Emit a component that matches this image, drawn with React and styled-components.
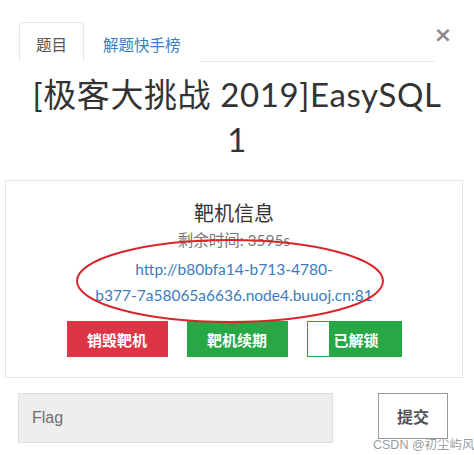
import React from "react";
import styled, { createGlobalStyle } from "styled-components";

const Global = createGlobalStyle`
  html, body { margin: 0; padding: 0; background: #fff; }
  body { font-family: Lato, "Noto Sans CJK SC", sans-serif; color: #333; }
`;

const Page = styled.div`
  position: relative;
  width: 474px;
  height: 455px;
  overflow: hidden;
  padding-top: 22px;
  box-sizing: border-box;
`;

const Header = styled.div`
  display: flex;
  align-items: flex-start;
  padding-left: 19px;
`;

const Tabs = styled.div`
  flex: 0 0 416px;
  display: flex;
  border-bottom: 1px solid #e8e8e8;
`;

const Tab = styled.div`
  height: 40px;
  box-sizing: border-box;
  padding: 0 ${(p) => (p.$active ? "16px" : "18px")};
  display: flex;
  align-items: center;
  padding-top: 3px;
  font-family: "Noto Sans CJK SC", sans-serif;
  font-size: 15.5px;
  color: ${(p) => (p.$active ? "#555" : "#3b7fc0")};
  border: 1px solid ${(p) => (p.$active ? "#e6e6e6" : "transparent")};
  border-bottom: none;
  border-radius: 4px 4px 0 0;
  margin-bottom: -1px;
  background: #fff;
`;

const Close = styled.div`
  margin-left: 1px;
  width: 14px;
  display: flex;
  justify-content: center;
  margin-top: 1px;
  font-family: "DejaVu Sans", sans-serif;
  font-size: 22px;
  font-weight: bold;
  line-height: 24px;
  color: #8a8a8a;
`;

const Title = styled.h1`
  margin: 10px 0 0;
  text-align: center;
  font-family: Lato, "Noto Sans CJK SC", sans-serif;
  font-weight: 400;
  font-size: 33px;
  line-height: 45px;
  color: #333;
  letter-spacing: 0.6px;
`;

const Card = styled.section`
  position: relative;
  margin: 18px 11px 0 5px;
  border: 1px solid #e4e4e4;
  padding: 18px 0 20px;
  display: flex;
  flex-direction: column;
  align-items: center;
`;

const CardTitle = styled.div`
  font-family: "Noto Sans CJK SC", sans-serif;
  font-size: 20px;
  line-height: 28px;
  color: #333;
`;

const Remaining = styled.div`
  margin-top: 2px;
  font-family: Lato, "Noto Sans CJK SC", sans-serif;
  font-size: 15.5px;
  line-height: 22px;
  color: #7a7a7a;
`;

const Url = styled.a`
  margin-top: 5px;
  text-align: center;
  font-family: Lato, sans-serif;
  font-size: 15.5px;
  line-height: 26px;
  color: #3b7cbd;
  text-decoration: none;
`;

const Buttons = styled.div`
  margin-top: 13px;
  display: flex;
  gap: 19px;
`;

const Btn = styled.button`
  width: ${(p) => p.$w}px;
  height: 36px;
  border: 1px solid ${(p) => p.$bg};
  background: ${(p) =>
    p.$handle ? `linear-gradient(to right, #fff 21px, ${p.$bg} 21px)` : p.$bg};
  color: #fff;
  font-family: "Noto Sans CJK SC", sans-serif;
  font-weight: 700;
  font-size: 15px;
  padding: 0;
  padding-left: ${(p) => (p.$handle ? "4px" : "0")};
`;

const Ellipse = styled.svg`
  position: absolute;
  left: 0;
  top: 0;
  pointer-events: none;
`;

const FormRow = styled.div`
  margin-top: 15px;
  display: flex;
  align-items: flex-start;
  padding-left: 18px;
`;

const Input = styled.input`
  width: 315px;
  height: 50px;
  box-sizing: border-box;
  background: #eee;
  border: 1px solid #ddd;
  padding: 0 13px;
  font-family: "Liberation Sans", Arial, sans-serif;
  font-size: 16px;
  color: #555;
  &::placeholder { color: #6f6f6f; }
`;

const Submit = styled.button`
  margin-left: 45px;
  width: 70px;
  height: 46px;
  background: #fff;
  border: 1px solid #999;
  font-family: "Noto Sans CJK SC", sans-serif;
  font-weight: 700;
  font-size: 16px;
  color: #555;
  padding: 0;
`;

const Watermark = styled.div`
  position: absolute;
  left: 373px;
  top: 434px;
  font-family: "Liberation Sans", "Noto Sans CJK SC", sans-serif;
  font-size: 12.5px;
  color: rgba(120, 120, 120, 0.75);
  white-space: nowrap;
`;

export default function App() {
  return (
    <>
      <Global />
      <Page>
        <Header>
          <Tabs>
            <Tab $active>题目</Tab>
            <Tab>解题快手榜</Tab>
          </Tabs>
          <Close>×</Close>
        </Header>
        <Title>
          [极客大挑战 2019]EasySQL
          <br />1
        </Title>
        <Card>
          <CardTitle>靶机信息</CardTitle>
          <Remaining>剩余时间: 3595s</Remaining>
          <Url href="#">
            http://b80bfa14-b713-4780-
            <br />
            b377-7a58065a6636.node4.buuoj.cn:81
          </Url>
          <Buttons>
            <Btn $w={101} $bg="#dc3545">销毁靶机</Btn>
            <Btn $w={101} $bg="#28a745">靶机续期</Btn>
            <Btn $w={95} $bg="#28a745" $handle>已解锁</Btn>
          </Buttons>
        </Card>
        <FormRow>
          <Input placeholder="Flag" />
          <Submit>提交</Submit>
        </FormRow>
        <Ellipse width="474" height="455" viewBox="0 0 474 455">
          <ellipse cx="230" cy="281" rx="153" ry="41" fill="none" stroke="#d8262b" strokeWidth="2" />
        </Ellipse>
        <Watermark>CSDN @初尘屿风</Watermark>
      </Page>
    </>
  );
}
